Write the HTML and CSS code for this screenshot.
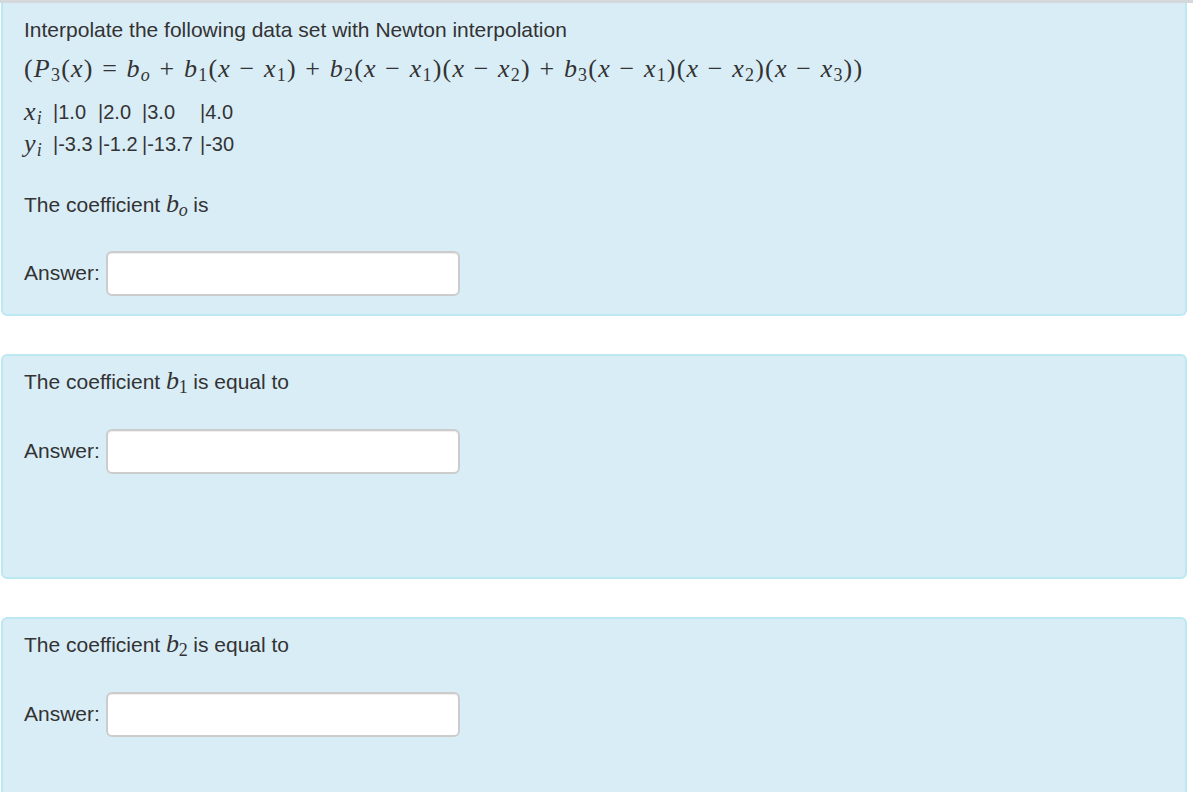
FILE: index.html
```html
<!DOCTYPE html>
<html lang="en">
<head>
    <meta charset="UTF-8">
    <meta name="viewport" content="width=device-width, initial-scale=1.0">
    <title>Newton interpolation quiz</title>
    <link rel="stylesheet" href="styles.css">
</head>
<body>

    <div class="top-bar"></div>

    <!-- Question 1 -->
    <section class="question question-first">
        <p class="line-intro">Interpolate the following data set with Newton interpolation</p>
        <p class="math line-formula">(<i>P</i><sub>3</sub>(<i>x</i>) = <i>b</i><sub><i>o</i></sub> + <i>b</i><sub>1</sub>(<i>x</i> − <i>x</i><sub>1</sub>) + <i>b</i><sub>2</sub>(<i>x</i> − <i>x</i><sub>1</sub>)(<i>x</i> − <i>x</i><sub>2</sub>) + <i>b</i><sub>3</sub>(<i>x</i> − <i>x</i><sub>1</sub>)(<i>x</i> − <i>x</i><sub>2</sub>)(<i>x</i> − <i>x</i><sub>3</sub>))</p>
        <div class="data-row data-row-first">
            <span class="math"><i>x</i><sub><i>i</i></sub></span>
            <span>|1.0</span>
            <span>|2.0</span>
            <span>|3.0</span>
            <span>|4.0</span>
        </div>
        <div class="data-row">
            <span class="math"><i>y</i><sub><i>i</i></sub></span>
            <span>|-3.3</span>
            <span>|-1.2</span>
            <span>|-13.7</span>
            <span>|-30</span>
        </div>
        <p class="line-ask line-ask-first">The coefficient <span class="math math-inline"><i>b</i><sub><i>o</i></sub></span> is</p>
        <form class="answer">
            <label for="answer-0">Answer:</label>
            <input type="text" id="answer-0">
        </form>
    </section>

    <!-- Question 2 -->
    <section class="question question-second">
        <p class="line-ask">The coefficient <span class="math math-inline"><i>b</i><sub>1</sub></span> is equal to</p>
        <form class="answer">
            <label for="answer-1">Answer:</label>
            <input type="text" id="answer-1">
        </form>
    </section>

    <!-- Question 3 -->
    <section class="question question-third">
        <p class="line-ask">The coefficient <span class="math math-inline"><i>b</i><sub>2</sub></span> is equal to</p>
        <form class="answer">
            <label for="answer-2">Answer:</label>
            <input type="text" id="answer-2">
        </form>
    </section>

</body>
</html>
```

FILE: styles.css
```css
/* General styling */
html, body {
    height: 792px;
    overflow: hidden;
}

body {
    margin: 0;
    padding: 0 6px 0 1px;
    font-family: "Liberation Sans", Arial, sans-serif;
    font-size: 21px;
    line-height: 28px;
    color: #333;
    background-color: #fff;
}

p {
    margin: 0;
}

.top-bar {
    height: 3px;
    margin: 0 -6px 0 -1px;
    background-color: #d4d8da;
}

/* Question panels */
.question {
    box-sizing: border-box;
    padding: 13px 21px;
    background-color: #d9edf7;
    border: 2px solid #bce8f1;
    border-radius: 6px;
}

.question-first {
    height: 313px;
    border-top: 0;
    border-radius: 0 0 6px 6px;
}

.question-second {
    height: 225px;
    margin-top: 38px;
    padding-top: 11px;
}

.question-third {
    height: 240px;
    margin-top: 38px;
    padding-top: 11px;
}

/* Math text */
.math {
    font-family: "Liberation Serif", "DejaVu Serif", serif;
    font-size: 26px;
    letter-spacing: 1.2px;
    word-spacing: 0.85px;
}

.math-inline {
    letter-spacing: -0.3px;
}

.math sub {
    font-size: 18px;
    line-height: 0;
    vertical-align: -4px;
}

.line-formula {
    margin-top: 10px;
    line-height: 30px;
    white-space: nowrap;
}

/* Data table, columns line up on the bars */
.data-row {
    display: grid;
    grid-template-columns: 29px 45px 44px 58px auto;
    font-size: 20px;
    line-height: 32px;
}

.data-row-first {
    margin-top: 12px;
}

.line-ask-first {
    margin-top: 30px;
}

/* Answer row */
.answer {
    display: flex;
    align-items: center;
    gap: 6px;
    margin-top: 33px;
}

.question-first .answer {
    margin-top: 32px;
}

.answer label {
    padding-bottom: 2px;
}

.answer input {
    box-sizing: border-box;
    width: 354px;
    height: 45px;
    padding: 6px 12px;
    background-color: #fff;
    border: 2px solid #ccc;
    border-radius: 6px;
    box-shadow: inset 0 1px 1px rgba(0, 0, 0, 0.075);
}
```
